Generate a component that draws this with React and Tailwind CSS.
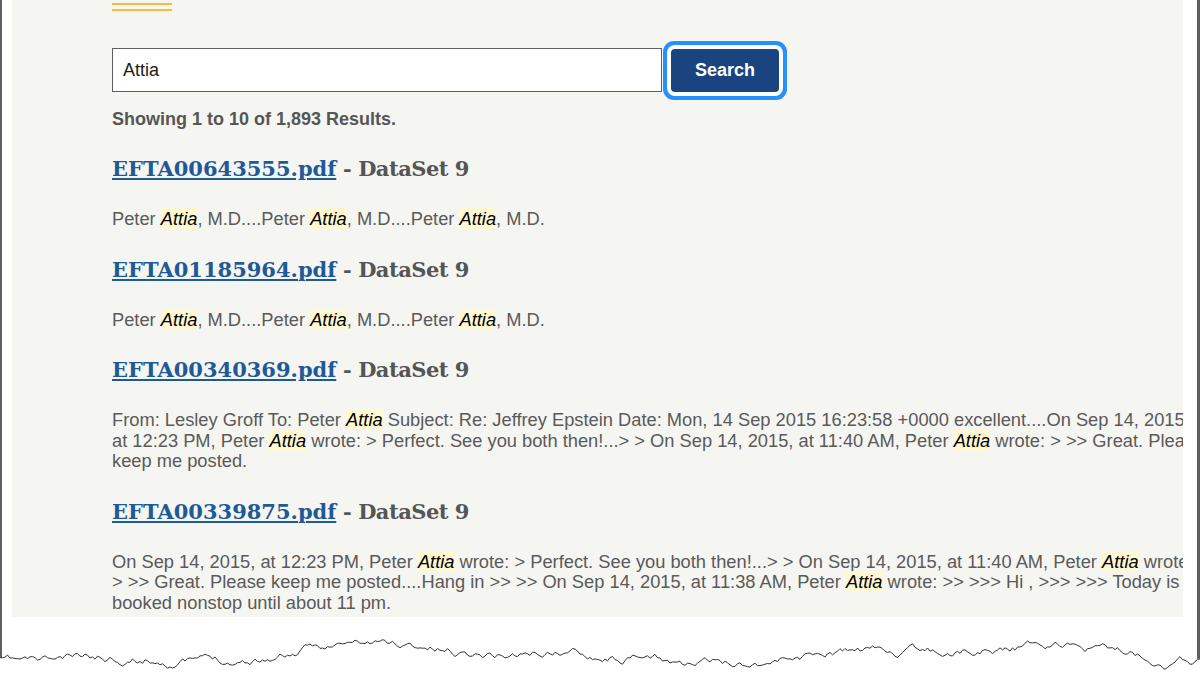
import React from "react";

const sans = { fontFamily: '"Liberation Sans", Arial, sans-serif' };

function tornPath() {
  let seed = 11;
  const rnd = () => {
    seed = (seed * 16807) % 2147483647;
    return seed / 2147483647;
  };
  const pts = [];
  let y = 0;
  for (let x = 0; x <= 1200; x += 2.5) {
    y += (rnd() - 0.5) * 6 - y * 0.1;
    const base = 37 + 7 * Math.sin(x / 95 + 0.4) + 4 * Math.sin(x / 37 + 1.3);
    pts.push(`${x},${(base + y).toFixed(1)}`);
  }
  return { d: "M" + pts.join(" L"), first: pts[0].split(",")[1], last: pts[pts.length - 1].split(",")[1] };
}

const torn = tornPath();

const Hl = ({ children }) => (
  <span className="bg-[#fff8d2] text-black italic">{children}</span>
);

const results = [
  {
    file: "EFTA00643555.pdf",
    lines: [
      <>Peter <Hl>Attia</Hl>, M.D....Peter <Hl>Attia</Hl>, M.D....Peter <Hl>Attia</Hl>, M.D.</>,
    ],
  },
  {
    file: "EFTA01185964.pdf",
    lines: [
      <>Peter <Hl>Attia</Hl>, M.D....Peter <Hl>Attia</Hl>, M.D....Peter <Hl>Attia</Hl>, M.D.</>,
    ],
  },
  {
    file: "EFTA00340369.pdf",
    lines: [
      <>From: Lesley Groff To: Peter <Hl>Attia</Hl> Subject: Re: Jeffrey Epstein Date: Mon, 14 Sep 2015 16:23:58 +0000 excellent....On Sep 14, 2015,</>,
      <>at 12:23 PM, Peter <Hl>Attia</Hl> wrote: &gt; Perfect. See you both then!...&gt; &gt; On Sep 14, 2015, at 11:40 AM, Peter <Hl>Attia</Hl> wrote: &gt; &gt;&gt; Great. Please</>,
      <>keep me posted.</>,
    ],
  },
  {
    file: "EFTA00339875.pdf",
    lines: [
      <>On Sep 14, 2015, at 12:23 PM, Peter <Hl>Attia</Hl> wrote: &gt; Perfect. See you both then!...&gt; &gt; On Sep 14, 2015, at 11:40 AM, Peter <Hl>Attia</Hl> wrote:</>,
      <>&gt; &gt;&gt; Great. Please keep me posted....Hang in &gt;&gt; &gt;&gt; On Sep 14, 2015, at 11:38 AM, Peter <Hl>Attia</Hl> wrote: &gt;&gt; &gt;&gt;&gt; Hi , &gt;&gt;&gt; &gt;&gt;&gt; Today is</>,
      <>booked nonstop until about 11 pm.</>,
    ],
  },
];

export default function App() {
  return (
    <div className="w-[1200px] h-[675px] bg-white overflow-hidden" style={sans}>
      {/* Page frame */}
      <div className="h-[617px] border-l-2 border-r-[3px] border-[#5f5f5f] pl-[10px] pr-[14px]">
        <div className="h-full bg-[#f5f5f1] overflow-hidden pl-[100px]">
          <div className="mt-[3px] h-[8px] w-[60px] border-y-2 border-[#f3b942]" />

          {/* Search row */}
          <div className="mt-[37px] flex items-center">
            <div className="w-[550px] h-[44px] bg-white border border-[#5c5f66] flex items-center pl-[10px] text-[18px] text-[#1b1b1b]">
              Attia
            </div>
            <button className="ml-[9px] w-[108px] h-[43px] rounded-[4px] bg-[#1a4480] text-white text-[18px] font-bold ring-4 ring-[#2491ff] ring-offset-4 ring-offset-white">
              Search
            </button>
          </div>

          <div className="mt-[17px] text-[18px] leading-[20px] font-bold text-[#565656]">
            Showing 1 to 10 of 1,893 Results.
          </div>

          {results.map((r) => (
            <div key={r.file}>
              <div
                className="mt-[25px] text-[21px] leading-[30px] font-bold whitespace-nowrap"
                style={{ fontFamily: '"DejaVu Serif", Georgia, serif' }}
              >
                <a href="#" className="text-[#1f5a98] underline underline-offset-2">{r.file}</a>
                <span className="text-[#555] tracking-[-0.5px]"> - DataSet 9</span>
              </div>
              <div className="mt-[25px] text-[18.3px] leading-[20.5px] text-[#5a5a5a]">
                {r.lines.map((l, i) => (
                  <div key={i} className="whitespace-nowrap">{l}</div>
                ))}
              </div>
            </div>
          ))}
        </div>
      </div>

      {/* Torn paper edge */}
      <svg width="1200" height="58" viewBox="0 0 1200 58" className="block">
        <line x1="1" y1="0" x2="1" y2={torn.first} stroke="#5f5f5f" strokeWidth="2" />
        <line x1="1198.5" y1="0" x2="1198.5" y2={torn.last} stroke="#5f5f5f" strokeWidth="3" />
        <path d={torn.d} fill="none" stroke="#333" strokeWidth="1" strokeLinejoin="round" />
      </svg>
    </div>
  );
}
